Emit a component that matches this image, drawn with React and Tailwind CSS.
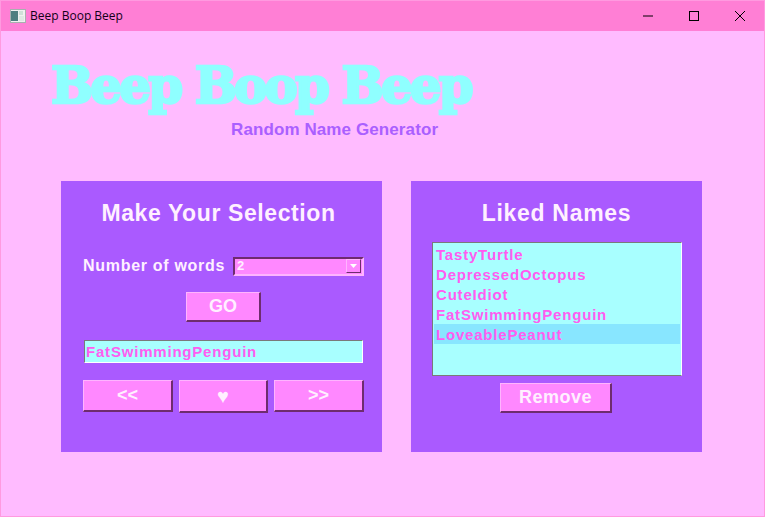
const liked = ["TastyTurtle", "DepressedOctopus", "CuteIdiot", "FatSwimmingPenguin", "LoveablePeanut"];

function RaisedButton({ className, children }) {
  return (
    <button className={"flex items-center justify-center bg-[#ff88ff] border border-t-[#ffb4ff] border-l-[#ffb4ff] border-r-2 border-b-2 border-r-[#6e2c6e] border-b-[#6e2c6e] text-[#fff0ff] font-bold " + className}>
      {children}
    </button>
  );
}

export default function App() {
  return (
    <div className="w-[765px] h-[517px] flex flex-col bg-[#ffbbff] border border-[#ff9ae0] overflow-hidden font-['Liberation_Sans',sans-serif]">
      <div className="h-[30px] shrink-0 flex items-center bg-[#ff7fd5] pl-[9px]">
        <svg width="16" height="14" viewBox="0 0 16 14" className="mr-[4px]">
          <rect x="0.5" y="0.5" width="15" height="13" fill="#f0f0f0" stroke="#a8b0b0" />
          <rect x="1" y="2" width="7" height="10" fill="#4f7f80" />
          <rect x="9" y="2" width="4" height="4" fill="#cfe0d8" />
          <rect x="9" y="7" width="5" height="5" fill="#dfe8e4" />
        </svg>
        <span className="text-[12px] text-[#120018] font-['Open_Sans',sans-serif]">Beep Boop Beep</span>
        <div className="ml-auto flex items-center">
          <svg width="46" height="30" viewBox="0 0 46 30"><path d="M17 15h10" stroke="#000" strokeWidth="1" /></svg>
          <svg width="46" height="30" viewBox="0 0 46 30"><rect x="17.5" y="10.5" width="9" height="9" fill="none" stroke="#000" /></svg>
          <svg width="46" height="30" viewBox="0 0 46 30"><path d="M17 10l10 10M27 10l-10 10" stroke="#000" strokeWidth="1" /></svg>
        </div>
      </div>

      <div className="flex-1 flex flex-col">
        <h1 className="ml-[50px] mt-[27px] h-[56px] text-[50px] leading-[56px] font-bold text-[#8fffff] font-['DejaVu_Serif',serif] tracking-[-2.9px] [-webkit-text-stroke:2.5px_#8fffff] whitespace-nowrap">
          Beep Boop Beep
        </h1>
        <p className="ml-[230px] mt-[6px] text-[17px] leading-[20px] font-bold text-[#aa5fff] tracking-[0.1px]">Random Name Generator</p>

        <div className="mt-[41px] ml-[60px] flex gap-[29px] items-start">
          <section className="w-[321px] h-[271px] bg-[#aa5aff] flex flex-col">
            <h2 className="mt-[18px] pr-[6px] text-center text-[23px] leading-[28px] font-bold text-[#fff0ff] tracking-[0.6px]">Make Your Selection</h2>
            <div className="mt-[29px] ml-[22px] flex items-center">
              <span className="w-[150px] shrink-0 text-[16px] leading-[20px] font-bold text-[#fff0ff] tracking-[0.7px] whitespace-nowrap">Number of words</span>
              <div className="w-[131px] h-[19px] flex items-center justify-between bg-[#ff88ff] border-2 border-t-[#6e2c6e] border-l-[#6e2c6e] border-r-[#ffb4ff] border-b-[#ffb4ff] pl-[2px] pr-[1px]">
                <span className="text-[13px] font-bold text-[#fff0ff]">2</span>
                <span className="w-[15px] h-[14px] flex items-center justify-center bg-[#ff88ff] border border-t-[#ffb4ff] border-l-[#ffb4ff] border-r-[#6e2c6e] border-b-[#6e2c6e]">
                  <svg width="7" height="4" viewBox="0 0 7 4"><path d="M0 0h7L3.5 4z" fill="#fff" /></svg>
                </span>
              </div>
            </div>
            <RaisedButton className="mt-[16px] ml-[125px] w-[75px] h-[30px] text-[18px]">GO</RaisedButton>
            <div className="mt-[18px] ml-[23px] w-[279px] h-[23px] flex items-center bg-[#a8ffff] border border-t-[#7a7a7a] border-l-[#7a7a7a] border-r-white border-b-white pl-[1px] pt-[1px]">
              <span className="text-[15px] font-bold text-[#ff5cf0] tracking-[0.8px]">FatSwimmingPenguin</span>
            </div>
            <div className="mt-[17px] ml-[22px] flex gap-[6px] items-start">
              <RaisedButton className="w-[90px] h-[32px] text-[18px]">&lt;&lt;</RaisedButton>
              <RaisedButton className="w-[89px] h-[33px] text-[20px]">♥</RaisedButton>
              <RaisedButton className="w-[90px] h-[32px] text-[18px]">&gt;&gt;</RaisedButton>
            </div>
          </section>

          <section className="w-[291px] h-[271px] bg-[#aa5aff] flex flex-col">
            <h2 className="mt-[18px] text-center text-[23px] leading-[28px] font-bold text-[#fff0ff] tracking-[0.7px]">Liked Names</h2>
            <ul className="mt-[15px] ml-[21px] w-[250px] h-[134px] bg-[#a8ffff] border border-t-[#7a7a7a] border-l-[#7a7a7a] border-r-white border-b-[#7a7a7a] p-[1px]">
              {liked.map((name, i) => (
                <li key={name} className={"h-[20px] pl-[2px] pt-[2px] flex items-center text-[15px] font-bold text-[#ff5cf0] tracking-[0.8px] " + (i === 4 ? "bg-[#88e6ff]" : "")}>
                  {name}
                </li>
              ))}
            </ul>
            <RaisedButton className="mt-[7px] ml-[89px] w-[112px] h-[30px] text-[18px] tracking-[0.5px]">Remove</RaisedButton>
          </section>
        </div>
      </div>
    </div>
  );
}
